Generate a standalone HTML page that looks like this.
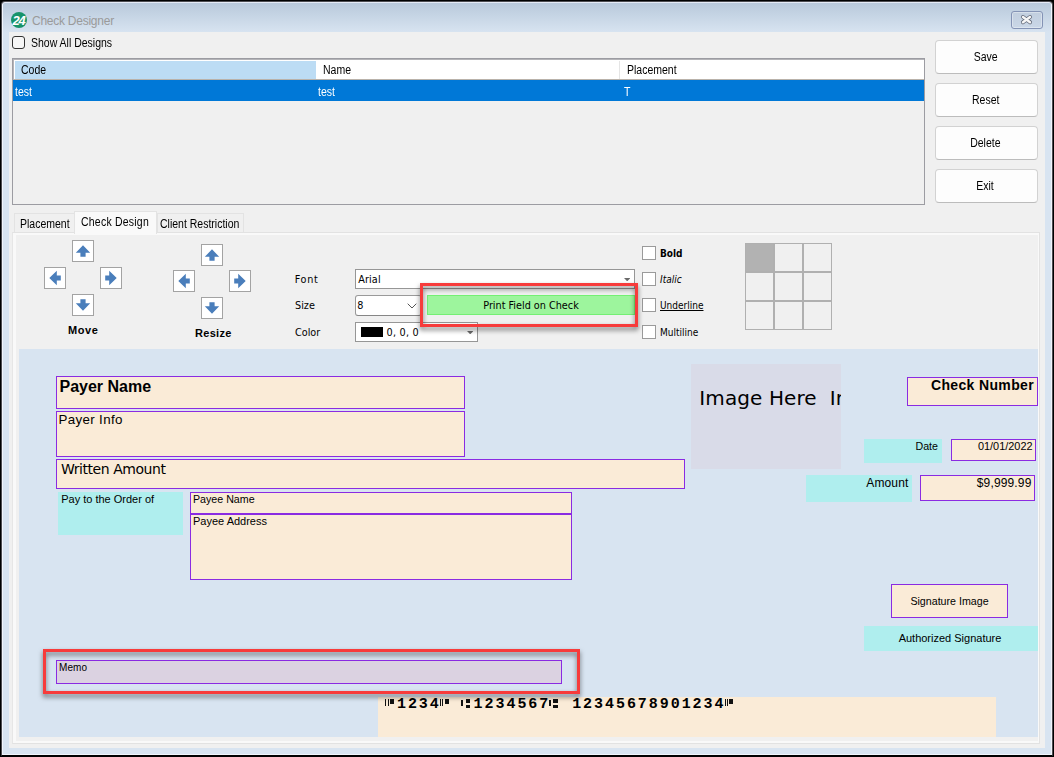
<!DOCTYPE html>
<html><head><meta charset="utf-8"><title>Check Designer</title>
<style>
*{box-sizing:border-box;margin:0;padding:0}
html,body{width:1054px;height:757px;overflow:hidden;background:#000}
body{position:relative;font-family:"Liberation Sans",sans-serif;font-size:11px;color:#000;line-height:1;}
.a{position:absolute}
.t{position:absolute;white-space:nowrap;line-height:1}
#frame{left:2px;top:2px;width:1050px;height:753px;background:#d8e4f1;border:1px solid #f1f5fc;border-top-color:#e6ebf7;border-radius:3px 3px 0 0;overflow:hidden}
#edge{left:1px;top:1px;width:1052px;height:755px;border:1px solid #4d4d52;border-bottom-color:#000;border-radius:4px 4px 0 0}
#tgrad{left:0;top:0;width:100%;height:30px;background:linear-gradient(#b9c9db 0,#c5d4e4 40%,#d8e4f1 100%)}
#client{left:9px;top:32px;width:1036px;height:716px;background:#f0f0f0}
.btn{position:absolute;left:935px;width:103px;height:34px;background:#fdfdfd;border:1px solid #d2d2d2;border-bottom-color:#bcbcbc;border-radius:4px;text-align:center;line-height:32px;font-size:11px}
.ab{position:absolute;width:22px;height:22px;background:#fff;border:1px solid #a3a3a3}
.ab svg{position:absolute;left:0;top:0}
.cb{position:absolute;left:642px;width:14px;height:14px;background:#fff;border:1px solid #9a9a9a}
.dx{font-family:"DejaVu Sans Condensed","Liberation Sans",sans-serif;font-size:10px}
.dl{font-size:10.75px}
.fld{position:absolute;background:#faebd7;border:1px solid #8a2be2}
.lbl{position:absolute;background:#afeeee}
.gc{position:absolute;width:29px;height:29px;border:1px solid #b0b0b0}
.red{position:absolute;border:3px solid #f73b3b;filter:drop-shadow(0 3px 2.8px rgba(0,0,0,.55))}
.ou,.tr{display:inline-block;position:relative;top:1.2px;width:9.5px;height:10px;vertical-align:baseline;margin:0 2.95px 0 -1.5px}
.ou i{position:absolute;top:0;width:1.1px;height:7.5px;background:#111}
.ou i:nth-child(1){left:.8px}.ou i:nth-child(2){left:3.1px}
.ou b{position:absolute;left:5.3px;top:0;width:4.2px;height:4.6px;background:#111}
.tr i{position:absolute;left:0;top:1px;width:2.2px;height:6.2px;background:#111}
.tr b{position:absolute;left:4.7px;width:4.3px;height:3.3px;background:#111}
.tr b:nth-child(2){top:.5px}.tr b:nth-child(3){top:5.8px}
.ms{font-size:12px;transform:scaleX(.875);transform-origin:0 0}
.btn span{display:inline-block;margin-right:2px;font-size:12px;transform:scaleX(.875)}
</style></head><body>
<div id="edge" class="a"></div>
<div id="frame" class="a"><div id="tgrad" class="a"></div></div>
<div id="client" class="a"></div>

<!-- title bar -->
<div class="a" style="left:11px;top:12px;width:16px;height:16px;border-radius:50%;background:#17936a"></div>
<div class="t" style="left:12.5px;top:14px;font-size:13px;font-weight:bold;font-style:italic;color:#fff;letter-spacing:-1.3px">24</div>
<div class="t" id="title" style="left:32px;top:15px;font-size:12px;color:#9a9a9a;letter-spacing:-.25px">Check Designer</div>
<div class="a" style="left:1011px;top:11px;width:32px;height:18px;border:1px solid #8493b5;border-radius:3px;background:linear-gradient(#c1cede,#cad7e7);box-shadow:inset 0 0 0 1px rgba(255,255,255,.35)"></div>
<svg class="a" style="left:1020px;top:14px" width="13" height="11" viewBox="0 0 13 11"><path d="M3 3 L10 8.2 M10 3 L3 8.2" stroke="#5f6675" stroke-width="4" stroke-linecap="round"/><path d="M3 3 L10 8.2 M10 3 L3 8.2" stroke="#f6f6f6" stroke-width="2.5" stroke-linecap="round"/></svg>

<!-- show all designs -->
<div class="a" style="left:12px;top:36px;width:13px;height:13px;border:1px solid #333;border-radius:3px;background:#f6f6f6"></div>
<div class="t ms" style="left:30.5px;top:37px">Show All Designs</div>

<!-- list -->
<div class="a" style="left:12px;top:58px;width:913px;height:147px;border:1px solid #9c9ca2;background:#f0f0f0"></div>
<div class="a" style="left:13px;top:59px;width:911px;height:21px;background:#fff;border-top:1px solid #b4b4b8;border-left:1px solid #b4b4b8;border-bottom:1px solid #b9b2aa"></div>
<div class="a" style="left:15px;top:61px;width:301px;height:18px;background:#bcdcf4"></div>
<div class="a" style="left:619px;top:61px;width:1px;height:18px;background:#e5e5e5"></div>
<div class="t ms" style="left:20.5px;top:64px">Code</div>
<div class="t ms" style="left:322.5px;top:64px">Name</div>
<div class="t ms" style="left:626.5px;top:64px">Placement</div>
<div class="a" style="left:13px;top:80px;width:911px;height:21px;background:#0078d7"></div>
<div class="t ms" style="left:15px;top:85.5px;color:#fff">test</div>
<div class="t ms" style="left:318px;top:85.5px;color:#fff">test</div>
<div class="t ms" style="left:624px;top:85.5px;color:#fff">T</div>

<!-- buttons -->
<div class="btn" style="top:40px"><span>Save</span></div>
<div class="btn" style="top:83px"><span>Reset</span></div>
<div class="btn" style="top:126px"><span>Delete</span></div>
<div class="btn" style="top:169px"><span>Exit</span></div>

<!-- tabs -->
<div class="a" style="left:12px;top:232px;width:1028px;height:512px;background:#f0f0f0;border:1px solid #e2e2e2;border-left-color:#e6e6e6"></div>
<div class="a" style="left:13px;top:233px;width:1026px;height:510px;border:3px solid #f9f9f9;border-top-width:2px;border-right-width:1px;border-bottom-width:2px"></div>
<div class="a" style="left:14px;top:213px;width:61px;height:19px;border:1px solid #e3e3e3;border-bottom:0;background:#f0f0f0"></div>
<div class="a" style="left:157px;top:213px;width:87px;height:19px;border:1px solid #e3e3e3;border-bottom:0;background:#f0f0f0"></div>
<div class="a" style="left:74px;top:211px;width:83px;height:23px;border:1px solid #e3e3e3;border-bottom:0;background:#f9f9f9"></div>
<div class="t ms" style="left:19.5px;top:218px">Placement</div>
<div class="t ms" style="left:80.7px;top:216px;letter-spacing:.25px">Check Design</div>
<div class="t ms" style="left:159.7px;top:218px">Client Restriction</div>

<!-- move / resize pads -->
<div class="ab" style="left:72px;top:240px"><svg width="20" height="20" viewBox="0 0 20 20"><path transform="rotate(0 10 10)" d="M10 4.3 L17.2 11.8 L12.6 11.8 L12.6 15.8 L7.4 15.8 L7.4 11.8 L2.8 11.8 Z" fill="#4a7ebb"/></svg></div>
<div class="ab" style="left:44px;top:267px"><svg width="20" height="20" viewBox="0 0 20 20"><path transform="rotate(270 10 10)" d="M10 4.3 L17.2 11.8 L12.6 11.8 L12.6 15.8 L7.4 15.8 L7.4 11.8 L2.8 11.8 Z" fill="#4a7ebb"/></svg></div>
<div class="ab" style="left:100px;top:267px"><svg width="20" height="20" viewBox="0 0 20 20"><path transform="rotate(90 10 10)" d="M10 4.3 L17.2 11.8 L12.6 11.8 L12.6 15.8 L7.4 15.8 L7.4 11.8 L2.8 11.8 Z" fill="#4a7ebb"/></svg></div>
<div class="ab" style="left:72px;top:294px"><svg width="20" height="20" viewBox="0 0 20 20"><path transform="rotate(180 10 10)" d="M10 4.3 L17.2 11.8 L12.6 11.8 L12.6 15.8 L7.4 15.8 L7.4 11.8 L2.8 11.8 Z" fill="#4a7ebb"/></svg></div>
<div class="ab" style="left:201px;top:244px"><svg width="20" height="20" viewBox="0 0 20 20"><path transform="rotate(0 10 10)" d="M10 4.3 L17.2 11.8 L12.6 11.8 L12.6 15.8 L7.4 15.8 L7.4 11.8 L2.8 11.8 Z" fill="#4a7ebb"/></svg></div>
<div class="ab" style="left:173px;top:270px"><svg width="20" height="20" viewBox="0 0 20 20"><path transform="rotate(270 10 10)" d="M10 4.3 L17.2 11.8 L12.6 11.8 L12.6 15.8 L7.4 15.8 L7.4 11.8 L2.8 11.8 Z" fill="#4a7ebb"/></svg></div>
<div class="ab" style="left:229px;top:270px"><svg width="20" height="20" viewBox="0 0 20 20"><path transform="rotate(90 10 10)" d="M10 4.3 L17.2 11.8 L12.6 11.8 L12.6 15.8 L7.4 15.8 L7.4 11.8 L2.8 11.8 Z" fill="#4a7ebb"/></svg></div>
<div class="ab" style="left:201px;top:297px"><svg width="20" height="20" viewBox="0 0 20 20"><path transform="rotate(180 10 10)" d="M10 4.3 L17.2 11.8 L12.6 11.8 L12.6 15.8 L7.4 15.8 L7.4 11.8 L2.8 11.8 Z" fill="#4a7ebb"/></svg></div>
<div class="t" style="left:68px;top:325px;font-weight:bold;letter-spacing:.55px">Move</div>
<div class="t" style="left:195px;top:328px;font-weight:bold;letter-spacing:.3px">Resize</div>

<!-- font / size / color -->
<div class="t dx dl" style="left:294.7px;top:275px;letter-spacing:.7px">Font</div>
<div class="t dx dl" style="left:295px;top:301px">Size</div>
<div class="t dx dl" style="left:295px;top:328px">Color</div>
<div class="a" style="left:355px;top:269px;width:280px;height:20px;background:#fff;border:1px solid #969696"></div>
<div class="t dx dl" style="left:358.3px;top:275px;letter-spacing:.1px">Arial</div>
<svg class="a" style="left:624px;top:278px" width="6.4" height="3.4" viewBox="0 0 8 4"><path d="M0 0H8L4 4Z" fill="#6a6a6a"/></svg>
<div class="a" style="left:355px;top:295px;width:67px;height:21px;background:#fff;border:1px solid #9a9a9a;border-bottom-color:#868686;border-radius:3px"></div>
<div class="t dx dl" style="left:357.3px;top:301px">8</div>
<svg class="a" style="left:407px;top:303.3px" width="10" height="6" viewBox="0 0 10 6"><path d="M.7 .7L5 5L9.3 .7" fill="none" stroke="#555" stroke-width="1"/></svg>
<div class="a" style="left:355px;top:322px;width:123px;height:20px;background:#fff;border:1px solid #969696"></div>
<div class="a" style="left:361px;top:327px;width:22px;height:10px;background:#000"></div>
<div class="t dx dl" style="left:386.5px;top:328px;letter-spacing:.25px">0, 0, 0</div>
<svg class="a" style="left:467px;top:331px" width="6.4" height="3.4" viewBox="0 0 8 4"><path d="M0 0H8L4 4Z" fill="#6a6a6a"/></svg>
<div class="a" style="left:427px;top:295px;width:208px;height:20px;background:#9df59d;border:1px solid #74ef74;text-align:center;line-height:18px" ><span class="dx dl">Print Field on Check</span></div>

<!-- checkboxes -->
<div class="cb" style="top:246px"></div><div class="t dx" style="left:660px;top:249px;font-weight:bold">Bold</div>
<div class="cb" style="top:272px"></div><div class="t dx" style="left:660px;top:275px;font-style:italic">Italic</div>
<div class="cb" style="top:298px"></div><div class="t dx" style="left:660px;top:301px;text-decoration:underline">Underline</div>
<div class="cb" style="top:325px"></div><div class="t dx" style="left:660px;top:328px">Multiline</div>

<!-- alignment grid -->
<div class="gc" style="left:745px;top:243px;background:#b2b2b2"></div><div class="gc" style="left:774px;top:243px"></div><div class="gc" style="left:803px;top:243px"></div><div class="gc" style="left:745px;top:272px"></div><div class="gc" style="left:774px;top:272px"></div><div class="gc" style="left:803px;top:272px"></div><div class="gc" style="left:745px;top:301px"></div><div class="gc" style="left:774px;top:301px"></div><div class="gc" style="left:803px;top:301px"></div>

<!-- check surface -->
<div class="a" id="check" style="left:19px;top:349px;width:1019px;height:388px;background:#d8e4f1;overflow:hidden">
<div class="fld" style="left:37px;top:27px;width:409px;height:33px"></div>
<div class="t" style="left:40.5px;top:29.5px;font-size:16px;font-weight:bold">Payer Name</div>
<div class="fld" style="left:37px;top:62px;width:409px;height:46px"></div>
<div class="t" style="left:39.5px;top:63.7px;font-size:13.33px;letter-spacing:.35px">Payer Info</div>
<div class="fld" style="left:37px;top:110px;width:629px;height:30px"></div>
<div class="t" style="left:42px;top:112.5px;font-size:14px;letter-spacing:-.45px;font-family:'DejaVu Sans',sans-serif">Written Amount</div>
<div class="lbl" style="left:39px;top:143px;width:125px;height:43px"></div>
<div class="t" style="left:42.2px;top:145px;font-size:11px">Pay to the Order of</div>
<div class="fld" style="left:171px;top:143px;width:382px;height:23px;border-bottom-width:2px"></div>
<div class="t" style="left:174px;top:145px;font-size:10.67px">Payee Name</div>
<div class="fld" style="left:171px;top:165px;width:382px;height:66px"></div>
<div class="t" style="left:174px;top:167px;font-size:11px">Payee Address</div>
<div class="a" style="left:672px;top:15px;width:150px;height:105px;background:#d9dbe8;overflow:hidden"><div class="t" style="left:8.3px;top:23.5px;font-size:20px;letter-spacing:.1px;font-family:'DejaVu Sans',sans-serif">Image Here&nbsp; Image Here</div></div>
<div class="fld" style="left:888px;top:28px;width:131px;height:29px"></div>
<div class="t" style="right:4px;top:29px;font-size:14px;font-weight:bold;letter-spacing:.35px">Check Number</div>
<div class="lbl" style="left:845px;top:90px;width:78px;height:24px"></div>
<div class="t" style="right:100px;top:92px;font-size:10.67px">Date</div>
<div class="fld" style="left:932px;top:90px;width:85px;height:22px"></div>
<div class="t" style="right:5.5px;top:92px;font-size:10.9px">01/01/2022</div>
<div class="lbl" style="left:787px;top:126px;width:106px;height:27px"></div>
<div class="t" style="right:129.5px;top:128px;font-size:12px;letter-spacing:.15px">Amount</div>
<div class="fld" style="left:901px;top:126px;width:115px;height:26px"></div>
<div class="t" style="right:6.5px;top:128px;font-size:12px;letter-spacing:.15px">$9,999.99</div>
<div class="fld" style="left:872px;top:235px;width:117px;height:34px;text-align:center;line-height:32px;font-size:10.67px">Signature Image</div>
<div class="lbl" style="left:845px;top:277px;width:174px;height:25px;text-align:center;line-height:25px;font-size:11px;padding-right:2px">Authorized Signature</div>
<div class="fld" style="left:37px;top:311px;width:506px;height:24px;background:#dbd2e1"></div>
<div class="t" style="left:40px;top:314px;font-size:10px;letter-spacing:.1px">Memo</div>
<div class="a" style="left:359px;top:348px;width:618px;height:40px;background:#faebd7"></div>
<div class="t" id="micr" style="left:367px;top:347.8px;font-family:'Liberation Mono',monospace;font-size:15px;letter-spacing:1.95px;font-weight:bold"><span class="ou"><i></i><i></i><b></b></span>1234<span class="ou"><i></i><i></i><b></b></span> <span class="tr"><i></i><b></b><b></b></span>1234567<span class="tr"><i></i><b></b><b></b></span> 12345678901234<span class="ou"><i></i><i></i><b></b></span></div>
</div>

<!-- annotation rectangles -->
<div class="red" style="left:420px;top:283px;width:218px;height:44px"></div>
<div class="red" style="left:43px;top:649px;width:537px;height:45px"></div>
</body></html>
